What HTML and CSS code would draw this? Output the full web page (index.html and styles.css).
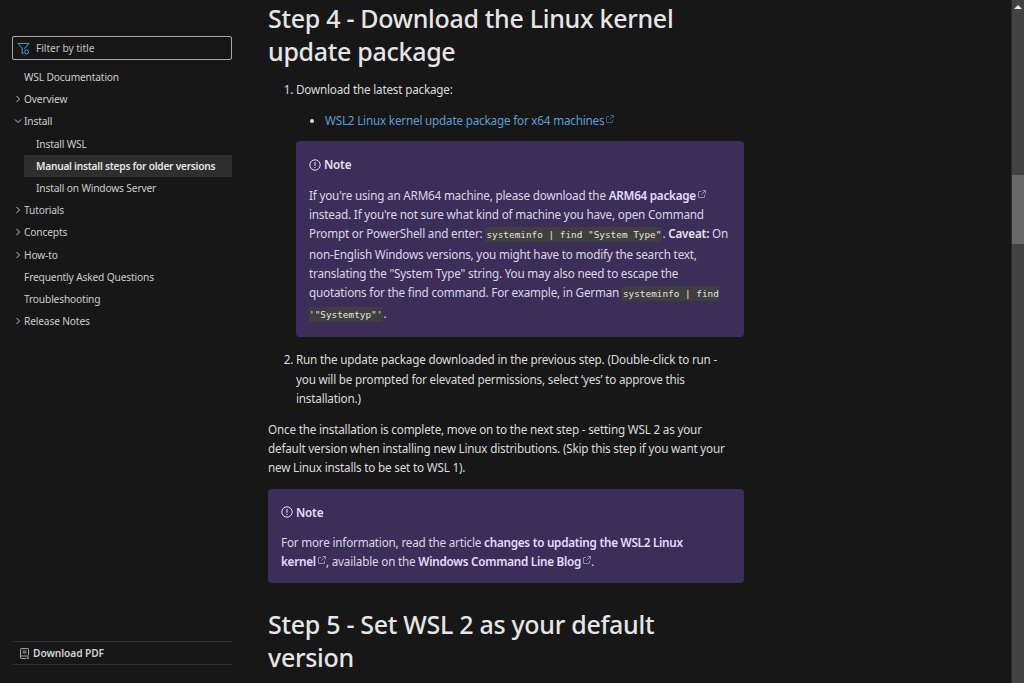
FILE: index.html
```html
<!DOCTYPE html>
<html lang="en">

<head>
    <meta charset="UTF-8">
    <meta name="viewport" content="width=device-width, initial-scale=1.0">
    <title>Manual install steps for older versions</title>
    <link rel="stylesheet" href="styles.css">
</head>

<body>
    <svg class="icon-defs" width="0" height="0">
        <symbol id="ext" viewBox="0 0 8 8">
            <path d="M3.2 1.5H1a.5.5 0 0 0-.5.5v5a.5.5 0 0 0 .5.5h5a.5.5 0 0 0 .5-.5V4.8M4.6.5h2.9v2.9M7.3.7 3.4 4.6" fill="none" stroke="currentColor" stroke-width=".7"/>
        </symbol>
        <symbol id="info" viewBox="0 0 12 12">
            <circle cx="6" cy="6" r="5.2" fill="none" stroke="currentColor" stroke-width="1"/>
            <path d="M6 2.9v3.9M6 8v1.1" fill="none" stroke="currentColor" stroke-width="1.1"/>
        </symbol>
        <symbol id="chev-right" viewBox="0 0 6 8">
            <path d="M1.5 1 4.5 4 1.5 7" fill="none" stroke="currentColor" stroke-width="1"/>
        </symbol>
    </svg>

    <div class="page">
        <aside class="sidebar">
            <div class="sidebar-top">
                <div class="filter-box">
                    <svg class="filter-icon" viewBox="0 0 14 14" width="13" height="13">
                        <path d="M1 1.5h12L8.4 6.6v1.2M1 1.5l4.6 5.1v6.2l1.6-1" fill="none" stroke="#4fa6df" stroke-width="1"/>
                        <circle cx="10.4" cy="10.6" r="2.1" fill="none" stroke="#4fa6df" stroke-width="1"/>
                    </svg>
                    <span>Filter by title</span>
                </div>
                <ul class="toc">
                    <li class="toc-item">WSL Documentation</li>
                    <li class="toc-item"><svg class="chev"><use href="#chev-right"/></svg>Overview</li>
                    <li class="toc-item"><svg class="chev chev-open"><use href="#chev-right"/></svg>Install</li>
                    <li class="toc-item toc-sub">Install WSL</li>
                    <li class="toc-item toc-sub toc-active">Manual install steps for older versions</li>
                    <li class="toc-item toc-sub">Install on Windows Server</li>
                    <li class="toc-item"><svg class="chev"><use href="#chev-right"/></svg>Tutorials</li>
                    <li class="toc-item"><svg class="chev"><use href="#chev-right"/></svg>Concepts</li>
                    <li class="toc-item"><svg class="chev"><use href="#chev-right"/></svg>How-to</li>
                    <li class="toc-item">Frequently Asked Questions</li>
                    <li class="toc-item">Troubleshooting</li>
                    <li class="toc-item"><svg class="chev"><use href="#chev-right"/></svg>Release Notes</li>
                </ul>
            </div>
            <div class="download-pdf">
                <svg viewBox="0 0 10 11" width="10" height="11">
                    <path d="M8.5 7V1.2a.7.7 0 0 0-.7-.7H1.2a.7.7 0 0 0-.7.7v8.6a.7.7 0 0 0 .7.7h5M.5 8h8M2.5 3h4M2.5 4.8h4M8 8.5v2M7 9.7l1 1 1-1" fill="none" stroke="#c8c8c8" stroke-width=".8"/>
                </svg>
                <span>Download PDF</span>
            </div>
        </aside>

        <main class="content">
            <h2>Step 4 - Download the Linux kernel update package</h2>
            <ol class="steps">
                <li>
                    <p>Download the latest package:</p>
                    <ul class="bullets">
                        <li><a class="link" href="#">WSL2 Linux kernel update package for x64 machines<svg class="ext"><use href="#ext"/></svg></a></li>
                    </ul>
                    <div class="note">
                        <p class="note-title"><svg class="info"><use href="#info"/></svg>Note</p>
                        <p>If you're using an ARM64 machine, please download the <a class="note-link" href="#">ARM64 package<svg class="ext"><use href="#ext"/></svg></a> instead. If you're not sure what kind of machine you have, open Command Prompt or PowerShell and enter: <code>systeminfo | find "System Type"</code>. <strong>Caveat:</strong> On non-English Windows versions, you might have to modify the search text, translating the "System Type" string. You may also need to escape the quotations for the find command. For example, in German <code>systeminfo | find '"Systemtyp"'</code>.</p>
                    </div>
                </li>
                <li>
                    <p class="step-text">Run the update package downloaded in the previous step. (Double-click to run - you will be prompted for elevated permissions, select ‘yes’ to approve this installation.)</p>
                </li>
            </ol>
            <p class="after-steps">Once the installation is complete, move on to the next step - setting WSL 2 as your default version when installing new Linux distributions. (Skip this step if you want your new Linux installs to be set to WSL 1).</p>
            <div class="note">
                <p class="note-title"><svg class="info"><use href="#info"/></svg>Note</p>
                <p>For more information, read the article <a class="note-link" href="#">changes to updating the WSL2 Linux <span class="keep">kernel<svg class="ext"><use href="#ext"/></svg></span></a>, available on the <a class="note-link" href="#">Windows Command Line Blog<svg class="ext"><use href="#ext"/></svg></a>.</p>
            </div>
            <h2 class="step-five">Step 5 - Set WSL 2 as your default version</h2>
        </main>

        <div class="scrollbar">
            <div class="scroll-arrow"></div>
            <div class="scroll-thumb"></div>
        </div>
    </div>
</body>

</html>
```

FILE: styles.css
```css
* {
    box-sizing: border-box;
}

html,
body {
    margin: 0;
    padding: 0;
    height: 683px;
    overflow: hidden;
}

body {
    font-family: "Noto Sans", "Open Sans", sans-serif;
    font-size: 11.7px;
    letter-spacing: -0.19px;
    line-height: 19.2px;
    background-color: #171717;
    color: #dcdcdc;
}

.icon-defs {
    display: block;
}

.page {
    display: flex;
    height: 683px;
}

/* sidebar */

.sidebar {
    width: 220px;
    margin-left: 12px;
    display: flex;
    flex-direction: column;
    justify-content: space-between;
    padding-top: 36px;
    padding-bottom: 18px;
    flex-shrink: 0;
}

.filter-box {
    height: 24px;
    display: flex;
    align-items: center;
    padding-left: 4px;
    gap: 6px;
    border: 1px solid #a8a8a8;
    border-radius: 2px;
    color: #c4c4c4;
    font-size: 10.2px;
    letter-spacing: -0.05px;
}

.filter-box span {
    padding-top: 1px;
}

.toc {
    list-style: none;
    margin: 6px 0 0 0;
    padding: 0 0 0 12px;
    letter-spacing: -0.15px;
}

.toc-item {
    position: relative;
    height: 22.2px;
    line-height: 22.2px;
    font-size: 10.2px;
    color: #cdcdcd;
}

.toc-sub {
    padding-left: 12px;
}

.toc-active {
    background-color: #2e2e2e;
    font-weight: 600;
    letter-spacing: -0.26px;
    color: #e6e6e6;
}

.chev {
    position: absolute;
    left: -9px;
    top: 7px;
    width: 6px;
    height: 8px;
    color: #c4c4c4;
}

.chev-open {
    transform: rotate(90deg);
}

.download-pdf {
    height: 24px;
    display: flex;
    align-items: center;
    gap: 3px;
    padding-left: 7px;
    margin-left: 1px;
    border-top: 1px solid #303030;
    border-bottom: 1px solid #303030;
    font-size: 10.2px;
    font-weight: 600;
    letter-spacing: -0.07px;
    color: #d2d2d2;
}

.download-pdf span {
    padding-top: 2px;
}

/* article */

.content {
    width: 476px;
    margin-left: 36px;
    flex-shrink: 0;
}

h2 {
    margin: 2px 0 0 0;
    font-size: 25px;
    letter-spacing: -0.3px;
    line-height: 33px;
    font-weight: 500;
    color: #e6e6e6;
}

h2.step-five {
    margin-top: 25px;
}

p {
    margin: 0;
}

.steps {
    margin: 12px 0 0 0;
    padding: 0 0 0 28px;
}

.steps > li + li {
    margin-top: 13px;
}

.step-text {
    max-width: 440px;
}

.after-steps {
    margin-top: 12px;
    max-width: 462px;
}

.bullets {
    margin: 12px 0 0 0;
    padding: 0 0 0 29px;
    list-style: disc;
}

.link {
    color: #5a9fd4;
    text-decoration: none;
}

.keep {
    white-space: nowrap;
}

.ext {
    width: 8px;
    height: 8px;
    margin-left: 2px;
    vertical-align: 2px;
    opacity: .75;
}

.note {
    margin-top: 11px;
    padding: 14px 13px 12px 13px;
    border-radius: 4px;
    background-color: #3b2e58;
    color: #dcd7e6;
}

.note-title {
    display: flex;
    align-items: center;
    gap: 3px;
    font-weight: 600;
    margin-bottom: 11px;
    color: #e6dff2;
}

.info {
    width: 12px;
    height: 12px;
}

.note-link {
    color: #e6dcff;
    font-weight: 600;
    letter-spacing: -0.25px;
    text-decoration: none;
}

strong {
    font-weight: 600;
    color: #e8e4f0;
}

code {
    font-family: "DejaVu Sans Mono", "Liberation Mono", monospace;
    font-size: 9.4px;
    letter-spacing: 0;
    line-height: 21px;
    padding: 2px 1px;
    border-radius: 2px;
    background-color: #3f3f3f;
    color: #e3e3e3;
}

/* scrollbar */

.scrollbar {
    position: absolute;
    top: 0;
    right: 0;
    width: 13px;
    height: 683px;
    background-color: #424242;
    border-left: 1px solid #2b2b2b;
}

.scroll-arrow {
    width: 0;
    height: 0;
    margin: 5px auto 0 auto;
    border-left: 4px solid transparent;
    border-right: 4px solid transparent;
    border-bottom: 4px solid #e8e8e8;
}

.scroll-thumb {
    height: 69px;
    margin-top: 166px;
    background-color: #686868;
}
```
